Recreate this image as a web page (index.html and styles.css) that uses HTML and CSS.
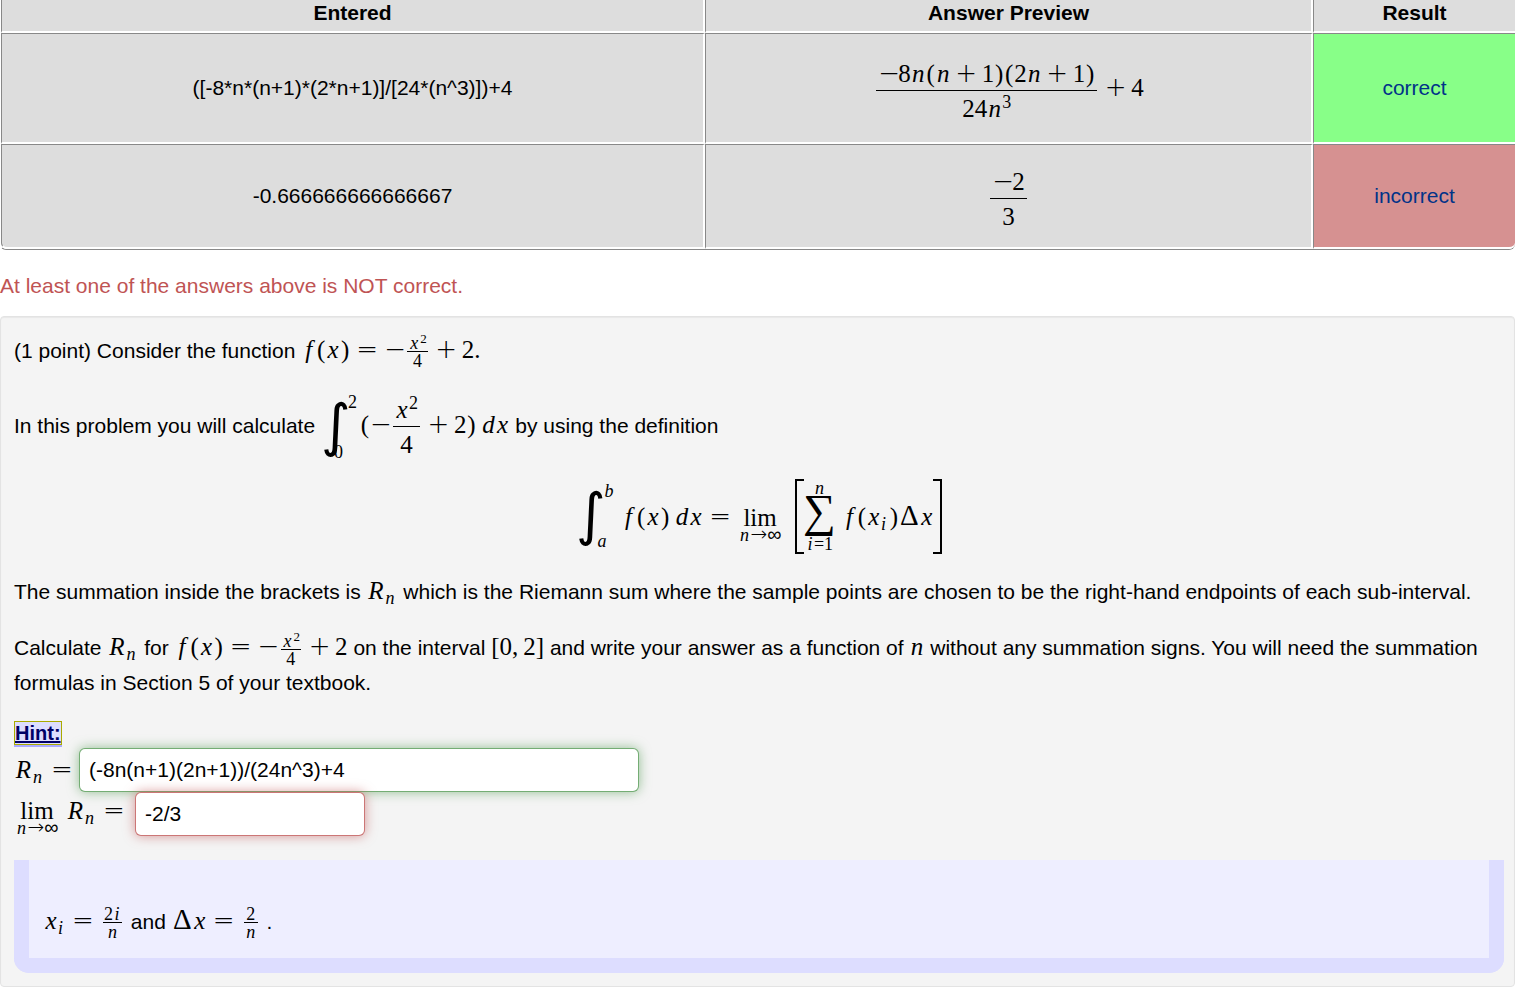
FILE: index.html
```
<!DOCTYPE html>
<html lang="en">
<head>
    <meta charset="UTF-8">
    <meta name="viewport" content="width=device-width, initial-scale=1.0">
    <title>Riemann Sum Problem</title>
    <link rel="stylesheet" href="styles.css">
</head>
<body>

<table class="results">
    <thead>
        <tr>
            <th class="col-entered" scope="col">Entered</th>
            <th class="col-preview" scope="col">Answer Preview</th>
            <th class="col-result" scope="col">Result</th>
        </tr>
    </thead>
    <tbody>
        <tr class="row-first">
            <td>([-8*n*(n+1)*(2*n+1)]/[24*(n^3)])+4</td>
            <td class="preview">
                <span class="math"><span class="frac"><span class="num"><span class="neg">−</span>8<i class="n">n</i><span class="par">(</span><i class="n">n</i><span class="op">+</span>1<span class="par">)</span><span class="par">(</span>2<i class="n">n</i><span class="op">+</span>1<span class="par">)</span></span><span class="den">24<i class="n">n</i><sup>3</sup></span></span><span class="op">+</span>4</span>
            </td>
            <td class="correct"><a href="#answer-sum">correct</a></td>
        </tr>
        <tr class="row-second">
            <td>-0.666666666666667</td>
            <td class="preview">
                <span class="math"><span class="frac"><span class="num"><span class="neg">−</span>2</span><span class="den">3</span></span></span>
            </td>
            <td class="incorrect"><a href="#answer-limit">incorrect</a></td>
        </tr>
    </tbody>
</table>

<p class="message">At least one of the answers above is NOT correct.</p>

<div class="problem">
    <p class="intro">(1 point) Consider the function <span class="math"><i class="f">f</i><span class="par">(</span><i>x</i><span class="par">)</span><span class="rel">=</span><span class="neg">−</span><span class="frac small"><span class="num"><i>x</i><sup>2</sup></span><span class="den">4</span></span><span class="op">+</span>2.</span></p>

    <p class="calculate">In this problem you will calculate <span class="math"><span class="integral"><span class="int-sign">∫</span><span class="limits"><span>2</span><span class="lower">0</span></span></span><span class="par">(</span><span class="neg">−</span><span class="frac"><span class="num"><i>x</i><sup>2</sup></span><span class="den">4</span></span><span class="op">+</span>2<span class="par">)</span><i class="d">d</i><i>x</i></span> by using the definition</p>

    <div class="definition math">
        <span class="integral"><span class="int-sign">∫</span><span class="limits"><i>b</i><i class="lower">a</i></span></span>
        <span class="integrand"><i class="f">f</i><span class="par">(</span><i>x</i><span class="par">)</span><i class="d">d</i><i>x</i><span class="rel">=</span></span>
        <span class="lim">lim<span class="under"><i>n</i><span class="arrow">→∞</span></span></span>
        <span class="brackets">
            <span class="sum"><i>n</i><span class="sum-sign">∑</span><span><i class="narrow">i</i><span class="equals">=</span>1</span></span>
            <span><i class="f">f</i><span class="par">(</span><i>x</i><sub><i class="narrow">i</i></sub><span class="par">)</span><span class="delta">Δ</span><i>x</i></span>
        </span>
    </div>

    <p class="riemann">The summation inside the brackets is <span class="math"><i class="r">R</i><sub><i>n</i></sub></span> which is the Riemann sum where the sample points are chosen to be the right-hand endpoints of each sub-interval.</p>

    <p class="task">Calculate <span class="math"><i class="r">R</i><sub><i>n</i></sub></span> for <span class="math"><i class="f">f</i><span class="par">(</span><i>x</i><span class="par">)</span><span class="rel">=</span><span class="neg">−</span><span class="frac small"><span class="num"><i>x</i><sup>2</sup></span><span class="den">4</span></span><span class="op">+</span>2</span> on the interval <span class="math">[0,<span class="thin"></span>2]</span> and write your answer as a function of <span class="math"><i class="n">n</i></span> without any summation signs. You will need the summation formulas in Section 5 of your textbook.</p>

    <a class="hint-link" href="#hint">Hint:</a>

    <div class="answer">
        <label class="math" for="answer-sum"><i class="r">R</i><sub><i>n</i></sub><span class="rel">=</span></label>
        <input class="answer-input is-correct" type="text" id="answer-sum" value="(-8n(n+1)(2n+1))/(24n^3)+4">
    </div>
    <div class="answer">
        <label class="math limit-label" for="answer-limit"><span class="lim">lim<span class="under"><i>n</i><span class="arrow">→∞</span></span></span><span><i class="r">R</i><sub><i>n</i></sub><span class="rel">=</span></span></label>
        <input class="answer-input is-incorrect" type="text" id="answer-limit" value="-2/3">
    </div>

    <div class="hint" id="hint">
        <span class="math"><i>x</i><sub><i class="narrow">i</i></sub><span class="rel">=</span><span class="frac small"><span class="num">2<i class="narrow">i</i></span><span class="den"><i>n</i></span></span></span>
        and
        <span class="math"><span class="delta">Δ</span><i>x</i><span class="rel">=</span><span class="frac small"><span class="num">2</span><span class="den"><i>n</i></span></span></span> .
    </div>
</div>

</body>
</html>
```
FILE: styles.css
```
* {
    box-sizing: border-box;
}
body {
    margin: 0;
    font-family: "Liberation Sans", Arial, sans-serif;
    font-size: 21px;
    line-height: 30px;
    color: #000;
    background-color: #fff;
}
p {
    margin: 0;
}

/* results table */
.results {
    width: 100%;
    table-layout: fixed;
    border-collapse: separate;
    border-spacing: 0;
    border-left: 1px solid #fff;
    border-bottom: 1px solid #888;
    border-radius: 0 0 6px 6px;
}
.results th, .results td {
    padding: 0;
    text-align: center;
    vertical-align: middle;
    background-color: #ddd;
    border-style: solid;
    border-width: 1px 2px 2px 1px;
    border-color: #888 #fff #fff #888;
}
.results th {
    height: 33px;
    padding-bottom: 6px;
    line-height: 24px;
    border-top: none;
}
.results th:last-child, .results td:last-child {
    border-right: none;
}
.col-entered {
    width: 704px;
}
.col-preview {
    width: 608px;
}
.row-first td {
    height: 111px;
}
.row-second td {
    height: 105px;
}
.row-second td:first-child {
    border-bottom-left-radius: 6px;
}
.row-second td:last-child {
    border-bottom-right-radius: 6px;
}
.results .preview {
    padding-top: 5px;
}
.results .correct {
    background-color: #8f8;
}
.results .incorrect {
    background-color: #d69191;
}
.results a {
    color: #038;
    text-decoration: none;
}

.message {
    padding: 21px 0 15px;
    color: #bf5454;
}

/* problem text */
.problem {
    padding: 19px 10px 13px 13px;
    border: 1px solid #e3e3e3;
    border-radius: 4px;
    background-color: #f4f4f4;
    box-shadow: inset 0 1px 1px rgba(0,0,0,0.05);
}
.intro {
    margin-bottom: 24px;
}
.definition {
    display: flex;
    justify-content: center;
    align-items: center;
    height: 80px;
    margin: 14px 0 21px;
}
.riemann {
    margin-bottom: 24px;
}
.task {
    margin-bottom: 21px;
    line-height: 34px;
}

/* formulas */
.math {
    font-family: "Liberation Serif", "Times New Roman", serif;
    font-size: 25px;
    line-height: 25px;
    white-space: nowrap;
}
.math i {
    display: inline-block;
    min-width: 14px;
    text-align: center;
}
.math .n {
    min-width: 15px;
}
.math .f {
    min-width: 15px;
}
.math .r {
    min-width: 19px;
}
.math .d {
    margin-left: 5px;
}
.math sup, .math sub {
    font-size: 18px;
    line-height: 0;
}
.math sup {
    vertical-align: 9px;
}
.math sub {
    vertical-align: -5px;
}
.math sub i, .under i, .limits i, .small i, .sum i {
    min-width: 12px;
}
.math sub i {
    text-align: left;
}
.math .narrow {
    min-width: 8px;
}
.par {
    display: inline-block;
    width: 10px;
    text-align: center;
}
.delta {
    display: inline-block;
    width: 21px;
    font-size: 29px;
    line-height: 25px;
    text-align: center;
}
.op, .rel, .neg {
    display: inline-block;
    font-family: "DejaVu Sans", sans-serif;
    font-weight: 200;
    font-size: 26px;
    line-height: 20px;
    text-align: center;
}
.neg {
    width: 20px;
}
.op {
    width: 31px;
}
.rel {
    width: 34px;
}
.thin {
    padding-left: 5px;
}
.frac {
    display: inline-block;
    vertical-align: middle;
    text-align: center;
    margin: 0 3px;
}
.frac .num, .frac .den {
    display: block;
    height: 35px;
    padding: 0 2px;
    line-height: 35px;
}
.frac .num {
    border-bottom: 1px solid #000;
}
.frac.small {
    margin: -2px 3px;
    font-size: 18px;
}
.frac.small .num, .frac.small .den {
    height: 18px;
    padding: 0 1px;
    line-height: 18px;
}
.frac.small sup {
    font-size: 13px;
    vertical-align: 6px;
}
.integral {
    display: inline-flex;
    align-items: center;
    vertical-align: middle;
    height: 66px;
}
.int-sign {
    width: 27px;
    padding-bottom: 4px;
    font-family: "DejaVu Sans", sans-serif;
    font-weight: 200;
    font-style: italic;
    font-size: 57px;
    line-height: 62px;
    text-align: center;
}
.limits {
    display: flex;
    flex-direction: column;
    justify-content: space-between;
    height: 66px;
    padding-right: 3px;
    font-size: 18px;
    line-height: 16px;
}
.limits .lower {
    margin-left: -14px;
}
.integrand {
    margin-left: 3px;
}
.lim {
    display: inline-flex;
    flex-direction: column;
    align-items: center;
    min-width: 46px;
}
.definition .lim {
    margin-top: 14px;
}
.under {
    margin-top: -3px;
    font-size: 18px;
    line-height: 14px;
}
.arrow {
    font-family: "DejaVu Sans", sans-serif;
    font-weight: 200;
    font-size: 20px;
}
.brackets {
    position: relative;
    display: flex;
    align-items: center;
    height: 75px;
    margin-left: 12px;
    padding: 0 8px;
}
.brackets::before, .brackets::after {
    content: "";
    position: absolute;
    top: 0;
    bottom: 0;
    width: 7px;
    border: 2px solid #000;
}
.brackets::before {
    left: 0;
    border-right: none;
}
.brackets::after {
    right: 0;
    border-left: none;
}
.sum {
    display: flex;
    flex-direction: column;
    align-items: center;
    margin-right: 6px;
    font-size: 18px;
    line-height: 16px;
}
.sum-sign {
    padding-bottom: 10px;
    font-size: 46px;
    line-height: 30px;
}

/* answers */
.hint-link {
    display: block;
    width: fit-content;
    margin-bottom: 3px;
    line-height: 22px;
    font-size: 20px;
    font-weight: bold;
    color: #006;
    text-decoration: underline;
    background-color: #ddf;
    border: 1px solid #aa0;
    box-shadow: 0 2px 0 #aaf;
}
.answer {
    display: flex;
    align-items: center;
}
.answer .limit-label {
    display: flex;
    align-items: baseline;
    gap: 6px;
    height: 44px;
    padding-top: 6px;
}
.answer-input {
    height: 44px;
    padding: 0 9px;
    font-family: inherit;
    font-size: 21px;
    color: #000;
    background-color: #fff;
    border: 1px solid;
    border-radius: 6px;
}
.is-correct {
    width: 560px;
    border-color: rgba(81,153,81,0.8);
    box-shadow: 0 0 12px rgba(81,153,81,0.6);
}
.is-incorrect {
    width: 230px;
    margin-left: 4px;
    border-color: rgba(191,84,84,0.8);
    box-shadow: 0 0 12px rgba(191,84,84,0.6);
}
.hint {
    margin-top: 24px;
    padding: 47px 15px 19px;
    background-color: #eef;
    border: 15px solid #ddf;
    border-top: none;
    border-radius: 0 0 15px 15px;
}
```
